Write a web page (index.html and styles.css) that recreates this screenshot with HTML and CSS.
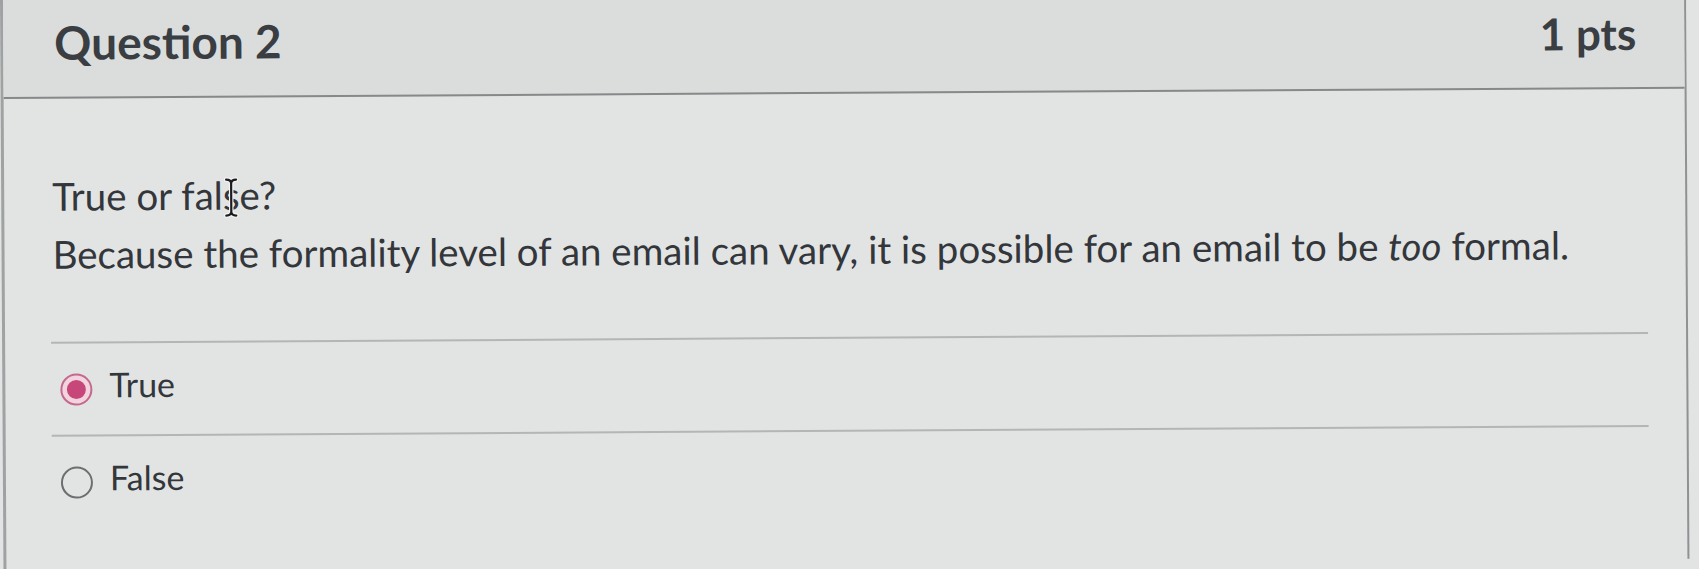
FILE: index.html
```html
<!DOCTYPE html>
<html lang="en">
<head>
<meta charset="utf-8">
<title>Question 2</title>
<link rel="stylesheet" href="styles.css">
</head>
<body>
<div class="quiz-card">
  <div class="quiz-header">
    <h2 class="question-title">Question 2</h2>
    <div class="question-points">1 pts</div>
  </div>
  <div class="quiz-body">
    <div class="question-text">
      <p>True or fal<span class="cursor-host">s<svg class="text-cursor" viewBox="0 0 14 40" width="14" height="40" aria-hidden="true"><path class="cursor-halo" d="M2 2 C5 2 7 3 7 6 C7 3 9 2 12 2 M7 6 V34 M2 38 C5 38 7 37 7 34 C7 37 9 38 12 38"/><path class="cursor-ink" d="M2 2 C5 2 7 3 7 6 C7 3 9 2 12 2 M7 6 V34 M2 38 C5 38 7 37 7 34 C7 37 9 38 12 38"/></svg></span>e?</p>
      <p>Because the formality level of an email can vary, it is possible for an email to be <em>too</em> formal.</p>
    </div>
    <div class="answers">
      <label class="answer">
        <svg class="radio" viewBox="0 0 34 34" width="34" height="34" aria-hidden="true">
          <circle cx="17" cy="17" r="15" fill="#f1d4de" stroke="#c4698d" stroke-width="2"/>
          <circle cx="17" cy="17" r="9.5" fill="#c8477a"/>
        </svg>
        <span class="answer-label">True</span>
      </label>
      <label class="answer">
        <svg class="radio" viewBox="0 0 34 34" width="34" height="34" aria-hidden="true">
          <circle cx="17" cy="17" r="15" fill="none" stroke="#6c6e72" stroke-width="2"/>
        </svg>
        <span class="answer-label">False</span>
      </label>
    </div>
  </div>
</div>
</body>
</html>
```
FILE: styles.css
```css
html, body {
  margin: 0;
  height: 100%;
  overflow: hidden;
  background: #e2e4e3;
}

body {
  font-family: Lato, "Open Sans", Arial, sans-serif;
  color: #33363b;
}

/* The card sits very slightly tilted, as the screen it was taken from */
.quiz-card {
  width: 1686px;
  height: 569px;
  box-sizing: border-box;
  border-left: 3px solid #9fa1a2;
  border-right: 2px solid #8f9193;
  background: #e2e4e3;
  transform: rotate(-0.35deg);
  transform-origin: 0 0;
}

.quiz-header {
  display: flex;
  justify-content: space-between;
  align-items: flex-start;
  height: 99px;
  box-sizing: border-box;
  padding: 20px 48px 0 51px;
  background: #dbdddc;
  border-bottom: 2px solid #86888a;
}

.question-title,
.question-points {
  margin: 0;
  line-height: 46px;
  font-weight: 700;
  color: #3a3d42;
}

.question-title {
  font-size: 46px;
}

.question-points {
  font-size: 44px;
}

.quiz-body {
  padding: 68px 38px 0 46px;
}

.question-text {
  padding-left: 2px;
  padding-bottom: 59px;
}

.question-text p {
  margin: 0;
  font-size: 38.5px;
  line-height: 58px;
}

.question-text em {
  font-style: italic;
}

.cursor-host {
  position: relative;
}

.text-cursor {
  position: absolute;
  left: 50%;
  top: 50%;
  margin-left: -7px;
  margin-top: -17px;
  overflow: visible;
}

.cursor-halo,
.cursor-ink {
  fill: none;
  stroke-linecap: round;
}

.cursor-halo {
  stroke: #f4f4f4;
  stroke-width: 4.5;
}

.cursor-ink {
  stroke: #1c1c1e;
  stroke-width: 2.2;
}

.answer {
  display: flex;
  align-items: center;
  gap: 16px;
  height: 93px;
  box-sizing: border-box;
  padding-left: 8px;
  border-top: 2px solid #b3b5b6;
}

.answer-label {
  font-size: 34px;
  line-height: 40px;
  padding-bottom: 10px;
}
```
